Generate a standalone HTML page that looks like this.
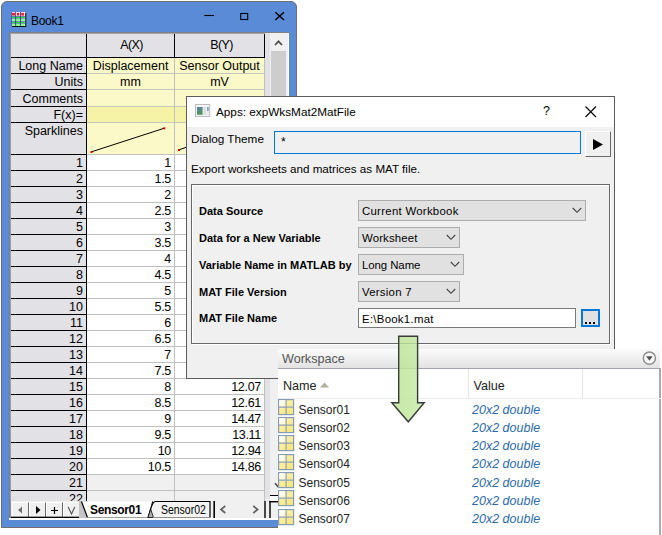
<!DOCTYPE html>
<html><head><meta charset="utf-8"><title>Book1</title>
<style>
html,body{margin:0;padding:0;background:#fff;}
body{width:662px;height:535px;position:relative;overflow:hidden;font-family:"Liberation Sans",sans-serif;}
.abs,.abs *{position:absolute;box-sizing:border-box;}
.ws{font-family:"Liberation Sans",sans-serif;font-size:12.5px;color:#000;white-space:nowrap;}
.hc{background:#e1e1e6;}
.t{line-height:16px;height:16px;}
.seg{font-family:"Liberation Sans",sans-serif;white-space:nowrap;color:#000;}
</style></head><body>

<div class="abs ws" id="win" style="left:1px;top:1px;width:296px;height:527px;background:#5a8bd6;border:1px solid #6e6e6e;border-radius:6px 6px 0 0;">
</div>
<div class="abs ws" id="book" style="left:0;top:0;width:662px;height:535px;">
<svg style="left:11px;top:12px" width="16" height="16" viewBox="0 0 16 16">
<rect x="1" y="1" width="14.3" height="14" fill="#101010"/>
<rect x="0" y="0" width="14.2" height="14" fill="#fff"/>
<g fill="#f82020"><rect x="1" y="0.8" width="3" height="2.8"/><rect x="5.9" y="0.8" width="2.4" height="2.8"/><rect x="10.2" y="0.8" width="3" height="2.8"/></g>
<g fill="#18e028"><rect x="0.8" y="4.8" width="13" height="1.7"/><rect x="0.8" y="9.7" width="13" height="1.7"/></g>
<g fill="#8cff8c"><rect x="0.8" y="7.1" width="13" height="2"/><rect x="0.8" y="12" width="13" height="2"/></g>
<g fill="#3838a8"><rect x="0" y="0" width="0.8" height="14"/><rect x="4.2" y="0" width="0.9" height="14"/><rect x="9.1" y="0" width="0.9" height="14"/>
<rect x="0" y="4" width="14" height="0.8" opacity="0.8"/><rect x="0" y="6.5" width="14" height="0.6" opacity="0.7"/><rect x="0" y="9" width="14" height="0.7" opacity="0.8"/><rect x="0" y="11.4" width="14" height="0.6" opacity="0.7"/></g>
</svg>
<div class="seg" style="left:31px;top:12px;font-size:12px;line-height:18px;letter-spacing:-0.3px;">Book1</div>
<svg style="left:200px;top:8px" width="90" height="18" viewBox="0 0 90 18">
<path d="M4.3 7.5H14" stroke="#000" stroke-width="1.1" fill="none"/>
<rect x="40.7" y="5.5" width="7" height="6" stroke="#000" stroke-width="1.1" fill="none"/>
<path d="M75.3 4.3L84 12M84 4.3L75.3 12" stroke="#000" stroke-width="1.5" fill="none"/>
</svg>
<div style="left:9px;top:32px;width:280px;height:488px;background:#fff;border-left:1px solid #808080;border-top:1px solid #808080;"></div>
<div style="left:10px;top:33px;width:255px;height:468px;background:#fff;overflow:hidden;" id="grid">
<div class="hc" style="left:0;top:0;width:255px;height:24px;"></div>
<div class="hc" style="left:0;top:0;width:76px;height:468px;"></div>
<div style="left:77px;top:25px;width:178px;height:96px;background:#fbf9c8;"></div>
<div style="left:77px;top:73px;width:178px;height:16px;background:#f7f3a6;"></div>
<div style="left:77px;top:442px;width:178px;height:30px;background:#f0f0f0;"></div>
<div style="left:0;top:24px;width:77px;height:1px;background:#000;"></div>
<div style="left:0;top:40px;width:77px;height:1px;background:#000;"></div>
<div style="left:0;top:56px;width:77px;height:1px;background:#000;"></div>
<div style="left:0;top:73px;width:77px;height:1px;background:#000;"></div>
<div style="left:0;top:89px;width:77px;height:1px;background:#000;"></div>
<div style="left:77px;top:40px;width:178px;height:1px;background:#c6c6c0;"></div>
<div style="left:77px;top:56px;width:178px;height:1px;background:#c6c6c0;"></div>
<div style="left:77px;top:73px;width:178px;height:1px;background:#c6c6c0;"></div>
<div style="left:77px;top:89px;width:178px;height:1px;background:#c6c6c0;"></div>
<div style="left:0;top:121px;width:77px;height:1px;background:#000;"></div>
<div style="left:77px;top:121px;width:178px;height:1px;background:#c0c0c0;"></div>
<div style="left:0;top:137px;width:77px;height:1px;background:#000;"></div>
<div style="left:77px;top:137px;width:178px;height:1px;background:#c0c0c0;"></div>
<div style="left:0;top:153px;width:77px;height:1px;background:#000;"></div>
<div style="left:77px;top:153px;width:178px;height:1px;background:#c0c0c0;"></div>
<div style="left:0;top:169px;width:77px;height:1px;background:#000;"></div>
<div style="left:77px;top:169px;width:178px;height:1px;background:#c0c0c0;"></div>
<div style="left:0;top:185px;width:77px;height:1px;background:#000;"></div>
<div style="left:77px;top:185px;width:178px;height:1px;background:#c0c0c0;"></div>
<div style="left:0;top:201px;width:77px;height:1px;background:#000;"></div>
<div style="left:77px;top:201px;width:178px;height:1px;background:#c0c0c0;"></div>
<div style="left:0;top:217px;width:77px;height:1px;background:#000;"></div>
<div style="left:77px;top:217px;width:178px;height:1px;background:#c0c0c0;"></div>
<div style="left:0;top:233px;width:77px;height:1px;background:#000;"></div>
<div style="left:77px;top:233px;width:178px;height:1px;background:#c0c0c0;"></div>
<div style="left:0;top:249px;width:77px;height:1px;background:#000;"></div>
<div style="left:77px;top:249px;width:178px;height:1px;background:#c0c0c0;"></div>
<div style="left:0;top:265px;width:77px;height:1px;background:#000;"></div>
<div style="left:77px;top:265px;width:178px;height:1px;background:#c0c0c0;"></div>
<div style="left:0;top:281px;width:77px;height:1px;background:#000;"></div>
<div style="left:77px;top:281px;width:178px;height:1px;background:#c0c0c0;"></div>
<div style="left:0;top:297px;width:77px;height:1px;background:#000;"></div>
<div style="left:77px;top:297px;width:178px;height:1px;background:#c0c0c0;"></div>
<div style="left:0;top:313px;width:77px;height:1px;background:#000;"></div>
<div style="left:77px;top:313px;width:178px;height:1px;background:#c0c0c0;"></div>
<div style="left:0;top:329px;width:77px;height:1px;background:#000;"></div>
<div style="left:77px;top:329px;width:178px;height:1px;background:#c0c0c0;"></div>
<div style="left:0;top:345px;width:77px;height:1px;background:#000;"></div>
<div style="left:77px;top:345px;width:178px;height:1px;background:#c0c0c0;"></div>
<div style="left:0;top:361px;width:77px;height:1px;background:#000;"></div>
<div style="left:77px;top:361px;width:178px;height:1px;background:#c0c0c0;"></div>
<div style="left:0;top:377px;width:77px;height:1px;background:#000;"></div>
<div style="left:77px;top:377px;width:178px;height:1px;background:#c0c0c0;"></div>
<div style="left:0;top:393px;width:77px;height:1px;background:#000;"></div>
<div style="left:77px;top:393px;width:178px;height:1px;background:#c0c0c0;"></div>
<div style="left:0;top:409px;width:77px;height:1px;background:#000;"></div>
<div style="left:77px;top:409px;width:178px;height:1px;background:#c0c0c0;"></div>
<div style="left:0;top:425px;width:77px;height:1px;background:#000;"></div>
<div style="left:77px;top:425px;width:178px;height:1px;background:#c0c0c0;"></div>
<div style="left:0;top:441px;width:77px;height:1px;background:#000;"></div>
<div style="left:77px;top:441px;width:178px;height:1px;background:#c0c0c0;"></div>
<div style="left:0;top:457px;width:77px;height:1px;background:#000;"></div>
<div style="left:77px;top:457px;width:178px;height:1px;background:#c0c0c0;"></div>
<div style="left:0;top:473px;width:77px;height:1px;background:#000;"></div>
<div style="left:77px;top:473px;width:178px;height:1px;background:#c0c0c0;"></div>
<div style="left:77px;top:24px;width:178px;height:1px;background:#000;"></div>
<div style="left:76px;top:0;width:1px;height:468px;background:#000;"></div>
<div style="left:164px;top:0;width:1px;height:25px;background:#000;"></div>
<div style="left:254px;top:0;width:1px;height:25px;background:#000;"></div>
<div style="left:164px;top:25px;width:1px;height:443px;background:#c0c0c0;"></div>
<div style="left:254px;top:25px;width:1px;height:443px;background:#c0c0c0;"></div>
<div class="t" style="left:78px;top:4px;width:87px;text-align:center;letter-spacing:-0.6px;">A(X)</div>
<div class="t" style="left:167px;top:4px;width:89px;text-align:center;letter-spacing:-0.6px;">B(Y)</div>
<div class="t" style="left:0;top:25.0px;width:73px;text-align:right;">Long Name</div>
<div class="t" style="left:77px;top:25.0px;width:87px;text-align:center;">Displacement</div>
<div class="t" style="left:165px;top:25.0px;width:89px;text-align:center;">Sensor Output</div>
<div class="t" style="left:0;top:41.0px;width:73px;text-align:right;">Units</div>
<div class="t" style="left:77px;top:41.0px;width:87px;text-align:center;">mm</div>
<div class="t" style="left:165px;top:41.0px;width:89px;text-align:center;">mV</div>
<div class="t" style="left:0;top:57.5px;width:73px;text-align:right;">Comments</div>
<div class="t" style="left:0;top:73.6px;width:73px;text-align:right;">F(x)=</div>
<div class="t" style="left:0;top:90.0px;width:73px;text-align:right;">Sparklines</div>
<svg style="left:77px;top:90px" width="178" height="32" viewBox="87 123 178 32">
<path d="M91.5 151.8L164 128.3" stroke="#000" stroke-width="1" fill="none"/>
<rect x="90.5" y="151" width="2" height="2" fill="#e00000"/><rect x="163.3" y="127.3" width="2" height="2" fill="#e00000"/>
<path d="M179 149.8L190 146" stroke="#000" stroke-width="1" fill="none"/>
<rect x="178" y="149" width="2" height="2" fill="#e00000"/>
</svg>
<div class="t" style="left:0;top:122px;width:73px;text-align:right;">1</div>
<div class="t" style="left:77px;top:122px;width:84px;text-align:right;letter-spacing:-0.3px;">1</div>
<div class="t" style="left:0;top:138px;width:73px;text-align:right;">2</div>
<div class="t" style="left:77px;top:138px;width:84px;text-align:right;letter-spacing:-0.3px;">1.5</div>
<div class="t" style="left:0;top:154px;width:73px;text-align:right;">3</div>
<div class="t" style="left:77px;top:154px;width:84px;text-align:right;letter-spacing:-0.3px;">2</div>
<div class="t" style="left:0;top:170px;width:73px;text-align:right;">4</div>
<div class="t" style="left:77px;top:170px;width:84px;text-align:right;letter-spacing:-0.3px;">2.5</div>
<div class="t" style="left:0;top:186px;width:73px;text-align:right;">5</div>
<div class="t" style="left:77px;top:186px;width:84px;text-align:right;letter-spacing:-0.3px;">3</div>
<div class="t" style="left:0;top:202px;width:73px;text-align:right;">6</div>
<div class="t" style="left:77px;top:202px;width:84px;text-align:right;letter-spacing:-0.3px;">3.5</div>
<div class="t" style="left:0;top:218px;width:73px;text-align:right;">7</div>
<div class="t" style="left:77px;top:218px;width:84px;text-align:right;letter-spacing:-0.3px;">4</div>
<div class="t" style="left:0;top:234px;width:73px;text-align:right;">8</div>
<div class="t" style="left:77px;top:234px;width:84px;text-align:right;letter-spacing:-0.3px;">4.5</div>
<div class="t" style="left:0;top:250px;width:73px;text-align:right;">9</div>
<div class="t" style="left:77px;top:250px;width:84px;text-align:right;letter-spacing:-0.3px;">5</div>
<div class="t" style="left:0;top:266px;width:73px;text-align:right;">10</div>
<div class="t" style="left:77px;top:266px;width:84px;text-align:right;letter-spacing:-0.3px;">5.5</div>
<div class="t" style="left:0;top:282px;width:73px;text-align:right;">11</div>
<div class="t" style="left:77px;top:282px;width:84px;text-align:right;letter-spacing:-0.3px;">6</div>
<div class="t" style="left:0;top:298px;width:73px;text-align:right;">12</div>
<div class="t" style="left:77px;top:298px;width:84px;text-align:right;letter-spacing:-0.3px;">6.5</div>
<div class="t" style="left:0;top:314px;width:73px;text-align:right;">13</div>
<div class="t" style="left:77px;top:314px;width:84px;text-align:right;letter-spacing:-0.3px;">7</div>
<div class="t" style="left:0;top:330px;width:73px;text-align:right;">14</div>
<div class="t" style="left:77px;top:330px;width:84px;text-align:right;letter-spacing:-0.3px;">7.5</div>
<div class="t" style="left:0;top:346px;width:73px;text-align:right;">15</div>
<div class="t" style="left:77px;top:346px;width:84px;text-align:right;letter-spacing:-0.3px;">8</div>
<div class="t" style="left:165px;top:346px;width:86px;text-align:right;letter-spacing:-0.3px;">12.07</div>
<div class="t" style="left:0;top:362px;width:73px;text-align:right;">16</div>
<div class="t" style="left:77px;top:362px;width:84px;text-align:right;letter-spacing:-0.3px;">8.5</div>
<div class="t" style="left:165px;top:362px;width:86px;text-align:right;letter-spacing:-0.3px;">12.61</div>
<div class="t" style="left:0;top:378px;width:73px;text-align:right;">17</div>
<div class="t" style="left:77px;top:378px;width:84px;text-align:right;letter-spacing:-0.3px;">9</div>
<div class="t" style="left:165px;top:378px;width:86px;text-align:right;letter-spacing:-0.3px;">14.47</div>
<div class="t" style="left:0;top:394px;width:73px;text-align:right;">18</div>
<div class="t" style="left:77px;top:394px;width:84px;text-align:right;letter-spacing:-0.3px;">9.5</div>
<div class="t" style="left:165px;top:394px;width:86px;text-align:right;letter-spacing:-0.3px;">13.11</div>
<div class="t" style="left:0;top:410px;width:73px;text-align:right;">19</div>
<div class="t" style="left:77px;top:410px;width:84px;text-align:right;letter-spacing:-0.3px;">10</div>
<div class="t" style="left:165px;top:410px;width:86px;text-align:right;letter-spacing:-0.3px;">12.94</div>
<div class="t" style="left:0;top:426px;width:73px;text-align:right;">20</div>
<div class="t" style="left:77px;top:426px;width:84px;text-align:right;letter-spacing:-0.3px;">10.5</div>
<div class="t" style="left:165px;top:426px;width:86px;text-align:right;letter-spacing:-0.3px;">14.86</div>
<div class="t" style="left:0;top:442px;width:73px;text-align:right;">21</div>
<div class="t" style="left:0;top:458px;width:73px;text-align:right;">22</div>
</div>
<div style="left:10px;top:33px;width:1px;height:485px;background:#9c9ca2;"></div>
<div style="left:10px;top:33px;width:278px;height:1px;background:#a4a4aa;"></div>
<div class="hc" style="left:265px;top:33px;width:5px;height:468px;"></div>
<div style="left:270px;top:33px;width:18px;height:468px;background:#f0f0f0;"></div>
<div style="left:271px;top:51px;width:15px;height:300px;background:#cdcdcd;"></div>
<svg style="left:270px;top:33px" width="17" height="17" viewBox="0 0 17 17"><path d="M5 12L8.5 8.3L12 12" stroke="#505050" stroke-width="1.8" fill="none"/></svg>
<svg style="left:270px;top:478px" width="17" height="12" viewBox="0 0 17 12"><path d="M5 5.3L8.6 9.3L12 5.3" stroke="#505050" stroke-width="1.7" fill="none"/></svg>
<div style="left:270px;top:495px;width:20px;height:1px;background:#000;"></div>
<div style="left:270px;top:496px;width:20px;height:5px;background:#fff;"></div>
<div style="left:265px;top:499px;width:25px;height:1px;background:#fff;"></div>
<div style="left:10px;top:501px;width:279px;height:17px;background:#f0f0f0;" id="tabbar">
<div style="left:2px;top:1px;width:17px;height:16px;background:#f0f0f0;border-left:1px solid #fff;border-top:1px solid #fff;border-right:1px solid #696969;border-bottom:1px solid #696969;"><svg style="left:-1px;top:-1px" width="17" height="16" viewBox="0 0 17 16"><path d="M10 4.5v7L6 8z" fill="#707070"/></svg></div>
<div style="left:19px;top:1px;width:17px;height:16px;background:#f0f0f0;border-left:1px solid #fff;border-top:1px solid #fff;border-right:1px solid #696969;border-bottom:1px solid #696969;"><svg style="left:-1px;top:-1px" width="17" height="16" viewBox="0 0 17 16"><path d="M7 4v8L11.5 8z" fill="#000"/></svg></div>
<div style="left:36px;top:1px;width:17px;height:16px;background:#f0f0f0;border-left:1px solid #fff;border-top:1px solid #fff;border-right:1px solid #696969;border-bottom:1px solid #696969;"><svg style="left:-1px;top:-1px" width="17" height="16" viewBox="0 0 17 16"><path d="M5 8.5h7M8.5 5v7" stroke="#000" stroke-width="1.2"/></svg></div>
<div style="left:53px;top:1px;width:17px;height:16px;background:#f0f0f0;border-left:1px solid #fff;border-top:1px solid #fff;border-right:1px solid #696969;border-bottom:1px solid #696969;"><svg style="left:-1px;top:-1px" width="17" height="16" viewBox="0 0 17 16"><path d="M5.2 5L8.5 12L11.8 5" stroke="#505050" stroke-width="1.1" fill="none"/></svg></div>
<div style="left:1px;top:16px;width:70px;height:1px;background:#000;"></div>
<div style="left:1px;top:15px;width:70px;height:1px;background:rgba(0,0,0,0.35);"></div>
<svg style="left:68px;top:0" width="211" height="17" viewBox="78 501 211 17">
<path d="M79 501h9v17h-9z" fill="#c4c4c4"/>
<path d="M81.5 501.5L87.5 517.5H148.5L152.5 501.5z" fill="#fff"/>
<path d="M81.5 501.5L87.5 517.5" stroke="#000" stroke-width="1.2" fill="none"/>
<path d="M152.8 501.5L148.5 517.5" stroke="#000" stroke-width="1.2" fill="none"/>
<path d="M87.5 517.5H148.5" stroke="#a0a0a0" stroke-width="1" fill="none"/>
<path d="M148 517.5C151 511 151 502 155.5 501.5H210V517.5" stroke="#000" stroke-width="1.2" fill="#f4f4f4"/>
<path d="M148 517.5L150.6 509L153.5 517.5z" fill="#b0b0b0" stroke="#000" stroke-width="0.8"/>
<path d="M153 517.5H210" stroke="#909090" stroke-width="1"/>
<rect x="213.4" y="501" width="1.6" height="17" fill="#000"/>
<rect x="264.3" y="501" width="1.4" height="17" fill="#000"/>
<rect x="269.3" y="501" width="1.4" height="17" fill="#000"/>
<rect x="269.3" y="501" width="20" height="1.4" fill="#000"/>
<path d="M225.3 506L221 509.5L225.3 513" stroke="#606060" stroke-width="1.7" fill="none"/>
<path d="M253.3 506L257.6 509.5L253.3 513" stroke="#606060" stroke-width="1.7" fill="none"/>
</svg>
<div style="left:80px;top:1px;height:17px;line-height:17px;font-weight:bold;font-size:12px;letter-spacing:-0.35px;">Sensor01</div>
<div style="left:151px;top:1px;height:17px;line-height:17px;font-size:12px;transform:scaleX(0.872);transform-origin:0 0;">Sensor02</div>
</div>
<div style="left:10px;top:501px;width:1px;height:17px;background:#8c8c90;"></div>
<div style="left:9px;top:518px;width:280px;height:2px;background:#fff;"></div>
<div style="left:288px;top:33px;width:1px;height:486px;background:#fff;"></div>
</div>
<div class="abs seg" id="dlg" style="left:186px;top:96px;width:429px;height:283px;background:#f0f0f0;border:1px solid #5c5c5c;">
<div style="left:0;top:0;width:427px;height:30px;background:#fff;"></div>
<svg style="left:8px;top:7px" width="16" height="13" viewBox="0 0 16 13">
<defs><linearGradient id="ig" x1="0" y1="0" x2="0.6" y2="1"><stop offset="0" stop-color="#5a7fb8"/><stop offset="1" stop-color="#4f9a50"/></linearGradient></defs>
<rect x="0.5" y="0.5" width="14.2" height="12" fill="#f6f6f6" stroke="#bcbcbc"/>
<rect x="2" y="3" width="5.6" height="7.8" fill="url(#ig)"/>
<rect x="8.6" y="3" width="2.4" height="7.8" fill="#dcdcdc"/>
<rect x="12" y="3" width="1.8" height="4" fill="#7aa8cc"/><rect x="12" y="7" width="1.8" height="3.8" fill="#e6e6e6"/>
</svg>
<div style="left:29px;top:6px;font-size:11.75px;line-height:18px;">Apps: expWksMat2MatFile</div>
<svg style="left:350px;top:4px" width="70" height="22" viewBox="537 101 70 22">
<path d="M585.5 106.5L596 117M596 106.5L585.5 117" stroke="#000" stroke-width="1.1" fill="none"/>
</svg>
<div style="left:356px;top:5px;font-size:12.5px;line-height:18px;">?</div>
<div style="left:4px;top:33px;font-size:11.75px;line-height:18px;">Dialog Theme</div>
<div style="left:87px;top:34px;width:307px;height:23px;background:#f0f0f0;border:1px solid #0078d7;"></div>
<div style="left:94px;top:35.6px;font-size:12px;line-height:18px;">*</div>
<div style="left:398px;top:34px;width:26px;height:26px;background:#f0f0f0;border-left:1px solid #fff;border-top:1px solid #fff;border-right:1px solid #696969;border-bottom:1px solid #696969;"><svg style="left:6px;top:6px" width="12" height="13" viewBox="0 0 12 13"><path d="M1 1v11L11 6.5z" fill="#000"/></svg></div>
<div style="left:4px;top:63px;font-size:11.65px;line-height:18px;">Export worksheets and matrices as MAT file.</div>
<div style="left:4px;top:87px;width:419px;height:160px;border:1px solid #696969;box-shadow:1px 1px 0 #fff, inset 1px 1px 0 #fff;"></div>
<div style="left:12px;top:106px;font-size:11px;line-height:16px;font-weight:bold;">Data Source</div>
<div style="left:12px;top:133px;font-size:11px;line-height:16px;font-weight:bold;">Data for a New Variable</div>
<div style="left:12px;top:160px;font-size:11px;line-height:16px;font-weight:bold;">Variable Name in MATLAB by</div>
<div style="left:12px;top:187px;font-size:11px;line-height:16px;font-weight:bold;">MAT File Version</div>
<div style="left:12px;top:213px;font-size:11px;line-height:16px;font-weight:bold;">MAT File Name</div>
<div style="left:171px;top:103px;width:228px;height:21px;background:#e1e1e1;border:1px solid #adadad;"><div style="left:3px;top:1.6px;font-size:11.4px;line-height:17px;letter-spacing:0.28px;">Current Workbook</div><svg style="right:3px;top:6px" width="10" height="7" viewBox="0 0 10 7"><path d="M0.8 1L5 5.3L9.2 1" stroke="#404040" stroke-width="1.1" fill="none"/></svg></div>
<div style="left:171px;top:130px;width:102px;height:21px;background:#e1e1e1;border:1px solid #adadad;"><div style="left:3px;top:1.6px;font-size:11.4px;line-height:17px;letter-spacing:0.15px;">Worksheet</div><svg style="right:3px;top:6px" width="10" height="7" viewBox="0 0 10 7"><path d="M0.8 1L5 5.3L9.2 1" stroke="#404040" stroke-width="1.1" fill="none"/></svg></div>
<div style="left:171px;top:157px;width:106px;height:21px;background:#e1e1e1;border:1px solid #adadad;"><div style="left:3px;top:1.6px;font-size:11.4px;line-height:17px;letter-spacing:-0.06px;">Long Name</div><svg style="right:3px;top:6px" width="10" height="7" viewBox="0 0 10 7"><path d="M0.8 1L5 5.3L9.2 1" stroke="#404040" stroke-width="1.1" fill="none"/></svg></div>
<div style="left:171px;top:184px;width:102px;height:21px;background:#e1e1e1;border:1px solid #adadad;"><div style="left:3px;top:1.6px;font-size:11.4px;line-height:17px;letter-spacing:0.25px;">Version 7</div><svg style="right:3px;top:6px" width="10" height="7" viewBox="0 0 10 7"><path d="M0.8 1L5 5.3L9.2 1" stroke="#404040" stroke-width="1.1" fill="none"/></svg></div>
<div style="left:171px;top:211px;width:218px;height:20px;background:#fff;border:1px solid #7a7a7a;"><div style="left:3px;top:0.6px;font-size:11.4px;line-height:18px;letter-spacing:0.28px;">E:\Book1.mat</div></div>
<div style="left:394px;top:212px;width:19px;height:18px;background:#e1e1e1;border:2px solid #0078d7;"><div style="left:2px;top:11px;width:2px;height:2px;background:#000"></div><div style="left:6px;top:11px;width:2px;height:2px;background:#000"></div><div style="left:10px;top:11px;width:2px;height:2px;background:#000"></div></div>
</div>
<div class="abs seg" id="wsp" style="left:278px;top:349px;width:384px;height:186px;background:#fff;">
<div style="left:0;top:0;width:382px;height:19px;background:linear-gradient(#fbfbfb,#f2f2f2 40%,#e2e2e2);"></div>
<div style="left:0;top:19px;width:383px;height:1px;background:#a3a6b0;"></div>
<div style="left:381px;top:20px;width:2px;height:166px;background:#a9a9b1;"></div>
<div style="left:4px;top:1px;font-size:12.6px;line-height:18px;color:#555;">Workspace</div>
<svg style="left:364px;top:2px" width="16" height="16" viewBox="0 0 16 16"><circle cx="7.4" cy="7.1" r="6.1" fill="#f8f8f8" stroke="#8c8c8c" stroke-width="1.4"/><path d="M4.1 5.2h6.6L7.4 9.8z" fill="#555"/></svg>
<div style="left:0;top:49px;width:383px;height:1px;background:#ececec;"></div>
<div style="left:190px;top:20px;width:1px;height:30px;background:#e4e4e4;"></div>
<div style="left:304px;top:20px;width:1px;height:30px;background:#e4e4e4;"></div>
<div style="left:5px;top:27.6px;font-size:12.6px;line-height:18px;color:#222;">Name</div>
<svg style="left:42px;top:33px" width="9" height="6" viewBox="0 0 9 6"><path d="M0 5.5L4.5 0.5L9 5.5z" fill="#b0b09c"/></svg>
<div style="left:195.5px;top:27.8px;font-size:12.6px;line-height:18px;color:#222;">Value</div>
<svg style="left:0px;top:50px" width="17" height="17" viewBox="0 0 17 17"><defs><linearGradient id="yg0" x1="0" y1="0" x2="1" y2="1"><stop offset="0" stop-color="#fff6c4"/><stop offset="1" stop-color="#fbe36c"/></linearGradient><linearGradient id="wg0" x1="0" y1="0" x2="1" y2="1"><stop offset="0" stop-color="#ffffff"/><stop offset="1" stop-color="#fff6cc"/></linearGradient></defs><rect x="0.6" y="0.6" width="15" height="15" fill="url(#yg0)" stroke="#829cba" stroke-width="1.2"/><rect x="1.2" y="1.2" width="6.4" height="6.4" fill="url(#wg0)"/><path d="M8.1 1v14.4M1 8.1h14.4" stroke="#8ba3be" stroke-width="1.2"/></svg>
<div style="left:20.5px;top:51.6px;font-size:12px;line-height:18px;color:#222;">Sensor01</div>
<div style="left:194px;top:51.6px;font-size:12.5px;line-height:18px;color:#2b6aa8;font-style:italic;">20x2 double</div>
<svg style="left:0px;top:68px" width="17" height="17" viewBox="0 0 17 17"><defs><linearGradient id="yg1" x1="0" y1="0" x2="1" y2="1"><stop offset="0" stop-color="#fff6c4"/><stop offset="1" stop-color="#fbe36c"/></linearGradient><linearGradient id="wg1" x1="0" y1="0" x2="1" y2="1"><stop offset="0" stop-color="#ffffff"/><stop offset="1" stop-color="#fff6cc"/></linearGradient></defs><rect x="0.6" y="0.6" width="15" height="15" fill="url(#yg1)" stroke="#829cba" stroke-width="1.2"/><rect x="1.2" y="1.2" width="6.4" height="6.4" fill="url(#wg1)"/><path d="M8.1 1v14.4M1 8.1h14.4" stroke="#8ba3be" stroke-width="1.2"/></svg>
<div style="left:20.5px;top:69.8px;font-size:12px;line-height:18px;color:#222;">Sensor02</div>
<div style="left:194px;top:69.8px;font-size:12.5px;line-height:18px;color:#2b6aa8;font-style:italic;">20x2 double</div>
<svg style="left:0px;top:86px" width="17" height="17" viewBox="0 0 17 17"><defs><linearGradient id="yg2" x1="0" y1="0" x2="1" y2="1"><stop offset="0" stop-color="#fff6c4"/><stop offset="1" stop-color="#fbe36c"/></linearGradient><linearGradient id="wg2" x1="0" y1="0" x2="1" y2="1"><stop offset="0" stop-color="#ffffff"/><stop offset="1" stop-color="#fff6cc"/></linearGradient></defs><rect x="0.6" y="0.6" width="15" height="15" fill="url(#yg2)" stroke="#829cba" stroke-width="1.2"/><rect x="1.2" y="1.2" width="6.4" height="6.4" fill="url(#wg2)"/><path d="M8.1 1v14.4M1 8.1h14.4" stroke="#8ba3be" stroke-width="1.2"/></svg>
<div style="left:20.5px;top:88.1px;font-size:12px;line-height:18px;color:#222;">Sensor03</div>
<div style="left:194px;top:88.1px;font-size:12.5px;line-height:18px;color:#2b6aa8;font-style:italic;">20x2 double</div>
<svg style="left:0px;top:105px" width="17" height="17" viewBox="0 0 17 17"><defs><linearGradient id="yg3" x1="0" y1="0" x2="1" y2="1"><stop offset="0" stop-color="#fff6c4"/><stop offset="1" stop-color="#fbe36c"/></linearGradient><linearGradient id="wg3" x1="0" y1="0" x2="1" y2="1"><stop offset="0" stop-color="#ffffff"/><stop offset="1" stop-color="#fff6cc"/></linearGradient></defs><rect x="0.6" y="0.6" width="15" height="15" fill="url(#yg3)" stroke="#829cba" stroke-width="1.2"/><rect x="1.2" y="1.2" width="6.4" height="6.4" fill="url(#wg3)"/><path d="M8.1 1v14.4M1 8.1h14.4" stroke="#8ba3be" stroke-width="1.2"/></svg>
<div style="left:20.5px;top:106.3px;font-size:12px;line-height:18px;color:#222;">Sensor04</div>
<div style="left:194px;top:106.3px;font-size:12.5px;line-height:18px;color:#2b6aa8;font-style:italic;">20x2 double</div>
<svg style="left:0px;top:123px" width="17" height="17" viewBox="0 0 17 17"><defs><linearGradient id="yg4" x1="0" y1="0" x2="1" y2="1"><stop offset="0" stop-color="#fff6c4"/><stop offset="1" stop-color="#fbe36c"/></linearGradient><linearGradient id="wg4" x1="0" y1="0" x2="1" y2="1"><stop offset="0" stop-color="#ffffff"/><stop offset="1" stop-color="#fff6cc"/></linearGradient></defs><rect x="0.6" y="0.6" width="15" height="15" fill="url(#yg4)" stroke="#829cba" stroke-width="1.2"/><rect x="1.2" y="1.2" width="6.4" height="6.4" fill="url(#wg4)"/><path d="M8.1 1v14.4M1 8.1h14.4" stroke="#8ba3be" stroke-width="1.2"/></svg>
<div style="left:20.5px;top:124.6px;font-size:12px;line-height:18px;color:#222;">Sensor05</div>
<div style="left:194px;top:124.6px;font-size:12.5px;line-height:18px;color:#2b6aa8;font-style:italic;">20x2 double</div>
<svg style="left:0px;top:141px" width="17" height="17" viewBox="0 0 17 17"><defs><linearGradient id="yg5" x1="0" y1="0" x2="1" y2="1"><stop offset="0" stop-color="#fff6c4"/><stop offset="1" stop-color="#fbe36c"/></linearGradient><linearGradient id="wg5" x1="0" y1="0" x2="1" y2="1"><stop offset="0" stop-color="#ffffff"/><stop offset="1" stop-color="#fff6cc"/></linearGradient></defs><rect x="0.6" y="0.6" width="15" height="15" fill="url(#yg5)" stroke="#829cba" stroke-width="1.2"/><rect x="1.2" y="1.2" width="6.4" height="6.4" fill="url(#wg5)"/><path d="M8.1 1v14.4M1 8.1h14.4" stroke="#8ba3be" stroke-width="1.2"/></svg>
<div style="left:20.5px;top:142.8px;font-size:12px;line-height:18px;color:#222;">Sensor06</div>
<div style="left:194px;top:142.8px;font-size:12.5px;line-height:18px;color:#2b6aa8;font-style:italic;">20x2 double</div>
<svg style="left:0px;top:160px" width="17" height="17" viewBox="0 0 17 17"><defs><linearGradient id="yg6" x1="0" y1="0" x2="1" y2="1"><stop offset="0" stop-color="#fff6c4"/><stop offset="1" stop-color="#fbe36c"/></linearGradient><linearGradient id="wg6" x1="0" y1="0" x2="1" y2="1"><stop offset="0" stop-color="#ffffff"/><stop offset="1" stop-color="#fff6cc"/></linearGradient></defs><rect x="0.6" y="0.6" width="15" height="15" fill="url(#yg6)" stroke="#829cba" stroke-width="1.2"/><rect x="1.2" y="1.2" width="6.4" height="6.4" fill="url(#wg6)"/><path d="M8.1 1v14.4M1 8.1h14.4" stroke="#8ba3be" stroke-width="1.2"/></svg>
<div style="left:20.5px;top:161.1px;font-size:12px;line-height:18px;color:#222;">Sensor07</div>
<div style="left:194px;top:161.1px;font-size:12.5px;line-height:18px;color:#2b6aa8;font-style:italic;">20x2 double</div>
</div>
<svg class="abs" style="left:385px;top:330px;position:absolute" width="48" height="98" viewBox="385 330 48 98">
<defs><linearGradient id="ag" x1="0" y1="0" x2="1" y2="0"><stop offset="0" stop-color="#b7e38e"/><stop offset="1" stop-color="#c6eaa4"/></linearGradient></defs>
<path d="M398.7 336.3H417.6V402.8H424.2L408.3 421.8L391.8 402.8H398.7z" fill="url(#ag)" fill-opacity="0.8" stroke="#3a3a3a" stroke-width="1.4" stroke-linejoin="miter"/>
</svg>
</body></html>
